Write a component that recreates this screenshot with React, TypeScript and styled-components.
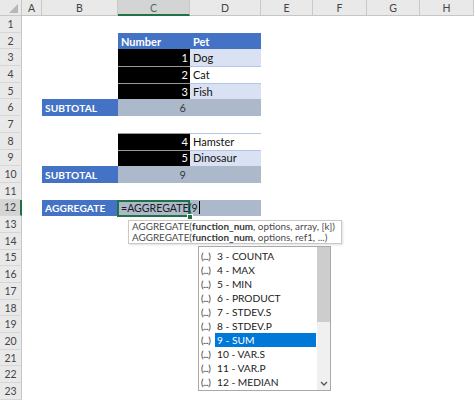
import React from "react";
import styled, { createGlobalStyle, css } from "styled-components";

const GlobalStyle = createGlobalStyle`
  html, body { margin: 0; padding: 0; background: #fff; }
  body { font-family: Lato, "Liberation Sans", Arial, sans-serif; }
`;

const COLS = ["A", "B", "C", "D", "E", "F", "G", "H"];
const ROW_COUNT = 23;
const ACTIVE_COL = "C";
const ACTIVE_ROW = 12;

type Kind = "head" | "black" | "light" | "plain" | "sub" | "label" | "active" | "empty";

interface CellSpec {
  text?: string;
  kind: Kind;
  align?: "left" | "right";
  line?: boolean;
}

const cells: Record<string, CellSpec> = {
  C2: { text: "Number", kind: "head" },
  D2: { text: "Pet", kind: "head" },
  C3: { text: "1", kind: "black", align: "right" },
  D3: { text: "Dog", kind: "light" },
  C4: { text: "2", kind: "black", align: "right", line: true },
  D4: { text: "Cat", kind: "plain", line: true },
  C5: { text: "3", kind: "black", align: "right", line: true },
  D5: { text: "Fish", kind: "light", line: true },
  B6: { text: "SUBTOTAL", kind: "label" },
  C6: { text: "6", kind: "sub", align: "right" },
  D6: { kind: "sub" },
  C8: { text: "4", kind: "black", align: "right", line: true },
  D8: { text: "Hamster", kind: "plain", line: true },
  C9: { text: "5", kind: "black", align: "right", line: true },
  D9: { text: "Dinosaur", kind: "light", line: true },
  B10: { text: "SUBTOTAL", kind: "label" },
  C10: { text: "9", kind: "sub", align: "right" },
  D10: { kind: "sub" },
  B12: { text: "AGGREGATE", kind: "label" },
  C12: { text: "=AGGREGATE(9", kind: "active" },
  D12: { kind: "sub" },
};

const options = [
  "3 - COUNTA",
  "4 - MAX",
  "5 - MIN",
  "6 - PRODUCT",
  "7 - STDEV.S",
  "8 - STDEV.P",
  "9 - SUM",
  "10 - VAR.S",
  "11 - VAR.P",
  "12 - MEDIAN",
];

const backgrounds: Record<Kind, string> = {
  head: "#4472c4",
  label: "#4472c4",
  black: "#000000",
  light: "#d9e1f2",
  plain: "#ffffff",
  sub: "#acb9ca",
  active: "#acb9ca",
  empty: "transparent",
};

const Sheet = styled.div`
  position: relative;
  width: 474px;
  height: 401px;
  overflow: hidden;
  display: grid;
  grid-template-columns: 22px 20px 76px 72px 71px 52px 54px 53px 54px;
  grid-template-rows: 16px repeat(${ROW_COUNT}, 16.7px);
  background: #fff;
`;

const Corner = styled.div`
  position: relative;
  background: #e9e9e9;
  border-right: 1px solid #c6c6c6;
  border-bottom: 1px solid #c6c6c6;
  box-sizing: border-box;

  &::after {
    content: "";
    position: absolute;
    right: 3px;
    bottom: 2px;
    width: 0;
    height: 0;
    border-left: 9px solid transparent;
    border-bottom: 9px solid #b7b7b7;
  }
`;

const ColHeader = styled.div<{ $active?: boolean }>`
  box-sizing: border-box;
  display: flex;
  align-items: center;
  justify-content: center;
  font-size: 10.5px;
  color: ${(p) => (p.$active ? "#4d6b5a" : "#444")};
  background: ${(p) => (p.$active ? "#d4d4d4" : "#e9e9e9")};
  border-right: 1px solid #c9c9c9;
  border-bottom: ${(p) => (p.$active ? "2px solid #217346" : "1px solid #c6c6c6")};
  padding-top: 1px;
`;

const RowHeader = styled.div<{ $active?: boolean }>`
  box-sizing: border-box;
  display: flex;
  align-items: center;
  justify-content: center;
  font-size: 10.5px;
  color: #444;
  background: ${(p) => (p.$active ? "#d4d4d4" : "#e9e9e9")};
  border-right: ${(p) => (p.$active ? "2px solid #217346" : "1px solid #c6c6c6")};
  border-bottom: 1px solid #d6d6d6;
`;

const Cell = styled.div<{ $kind: Kind; $align: "left" | "right"; $line?: boolean }>`
  box-sizing: border-box;
  display: flex;
  align-items: center;
  justify-content: ${(p) => (p.$align === "right" ? "flex-end" : "flex-start")};
  padding: 0 ${(p) => (p.$kind === "sub" ? "4px" : "2px")} 0 3px;
  white-space: nowrap;
  font-size: 11px;
  background: ${(p) => backgrounds[p.$kind]};
  color: ${(p) => (p.$kind === "plain" || p.$kind === "light" ? "#111" : p.$kind === "sub" ? "#3a3a3a" : "#fff")};
  box-shadow: ${(p) =>
    p.$line ? (p.$kind === "black" ? "inset 0 1px 0 #9a9a9a" : "inset 0 1px 0 #b4c6e7") : "none"};

  ${(p) =>
    (p.$kind === "head" || p.$kind === "label") &&
    css`
      font-weight: 700;
      padding-top: 1px;
    `}

  ${(p) =>
    p.$kind === "label" &&
    css`
      font-size: 10.2px;
      letter-spacing: 0.1px;
    `}

  ${(p) =>
    p.$kind === "active" &&
    css`
      position: relative;
      z-index: 2;
      overflow: visible;
      color: #1e1e1e;
      font-size: 10.6px;

      &::before {
        content: "";
        position: absolute;
        inset: 0 0 -1px -1px;
        border: 2px solid #217346;
      }

      &::after {
        content: "";
        position: absolute;
        right: -3px;
        bottom: -4px;
        width: 4px;
        height: 4px;
        background: #217346;
        border: 1px solid #fff;
      }
    `}
`;

const CellText = styled.span`
  position: relative;
  z-index: 1;
  display: inline-flex;
  align-items: center;
`;

const Caret = styled.span`
  display: inline-block;
  width: 1px;
  height: 13px;
  margin-left: 1px;
  background: #000;
`;

const Tooltip = styled.div`
  position: absolute;
  left: 128px;
  top: 220px;
  width: 214px;
  height: 24px;
  box-sizing: border-box;
  padding: 0 0 0 3px;
  background: #fff;
  border: 1px solid #c8c8c8;
  box-shadow: 1px 1px 2px rgba(0, 0, 0, 0.12);
  z-index: 3;
  font-size: 9.9px;
  line-height: 11px;
  color: #4a4a4a;
  white-space: nowrap;
  display: flex;
  flex-direction: column;
  justify-content: center;

  b {
    font-weight: 700;
    color: #3a3a3a;
  }
`;

const Dropdown = styled.div`
  position: absolute;
  left: 198px;
  top: 246px;
  width: 133px;
  box-sizing: border-box;
  background: #fff;
  border: 1px solid #a9a9a9;
  z-index: 3;
  display: flex;
`;

const List = styled.div`
  flex: 1;
  padding: 2px 0 1px 2px;
`;

const Item = styled.div`
  height: 14px;
  display: flex;
  align-items: center;
  font-size: 10.2px;
  color: #222;
  white-space: nowrap;
`;

const ItemIcon = styled.span`
  width: 14px;
  font-size: 9.6px;
  letter-spacing: -0.5px;
  color: #333;
`;

const ItemLabel = styled.span<{ $selected?: boolean }>`
  flex: 1;
  height: 14px;
  display: flex;
  align-items: center;
  padding-left: 2px;
  margin-right: 1px;
  background: ${(p) => (p.$selected ? "#0078d7" : "transparent")};
  color: ${(p) => (p.$selected ? "#fff" : "#222")};
`;

const Scrollbar = styled.div`
  width: 13px;
  background: #f0f0f0;
  display: flex;
  flex-direction: column;
  justify-content: space-between;
  align-items: center;
`;

const Thumb = styled.div`
  width: 100%;
  height: 75px;
  background: #cdcdcd;
`;

const Arrow = styled.div`
  height: 12px;
  display: flex;
  align-items: center;
  justify-content: center;
  margin-bottom: 1px;
`;

export default function App() {
  const rows = Array.from({ length: ROW_COUNT }, (_, i) => i + 1);
  return (
    <>
      <GlobalStyle />
      <Sheet>
        <Corner />
        {COLS.map((c) => (
          <ColHeader key={c} $active={c === ACTIVE_COL}>
            {c}
          </ColHeader>
        ))}
        {rows.map((r) => (
          <React.Fragment key={r}>
            <RowHeader $active={r === ACTIVE_ROW}>{r}</RowHeader>
            {COLS.map((c) => {
              const spec = cells[c + r] || { kind: "empty" as Kind };
              return (
                <Cell key={c} $kind={spec.kind} $align={spec.align || "left"} $line={spec.line}>
                  {spec.kind === "active" ? (
                    <CellText>
                      {spec.text}
                      <Caret />
                    </CellText>
                  ) : (
                    spec.text
                  )}
                </Cell>
              );
            })}
          </React.Fragment>
        ))}

        <Tooltip>
          <span>
            AGGREGATE(<b>function_num</b>, options, array, [k])
          </span>
          <span>
            AGGREGATE(<b>function_num</b>, options, ref1, ...)
          </span>
        </Tooltip>

        <Dropdown>
          <List>
            {options.map((o) => (
              <Item key={o}>
                <ItemIcon>(...)</ItemIcon>
                <ItemLabel $selected={o === "9 - SUM"}>{o}</ItemLabel>
              </Item>
            ))}
          </List>
          <Scrollbar>
            <Thumb />
            <Arrow>
              <svg width="8" height="5" viewBox="0 0 8 5">
                <path d="M1 1 L4 4 L7 1" fill="none" stroke="#555" strokeWidth="1.3" />
              </svg>
            </Arrow>
          </Scrollbar>
        </Dropdown>
      </Sheet>
    </>
  );
}
